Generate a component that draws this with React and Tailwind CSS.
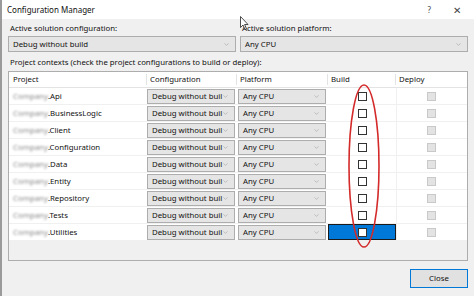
import { ChevronDown } from 'lucide-react'

const PROJECTS = ['Api', 'BusinessLogic', 'Client', 'Configuration', 'Data', 'Entity', 'Repository', 'Tests', 'Utilities']

function Combo({ value, className = '' }) {
  return (
    <div className={`flex items-center h-[15px] border border-[#adadad] bg-[#e5e5e5] pl-[4px] pr-[5px] ${className}`}>
      <span className="flex-1 min-w-0 whitespace-nowrap leading-[13px]">{value}</span>
      <ChevronDown size={7} strokeWidth={1.5} className="text-[#8a8a8a] shrink-0 ml-[1px]" />
    </div>
  )
}

function Row({ name, selected }) {
  return (
    <div className="grid grid-cols-[138px_90px_91px_68px_69px] h-[17px] border-b border-[#f0f0f0] items-center">
      <div className="pl-[4px] flex items-center leading-[13px]">
        <span className="blur-[1px] text-[#8a8a8a]">Company</span>
        <span>.{name}</span>
      </div>
      <div className="pr-[2px]">
        <Combo value="Debug without buil" className="pl-[3px] pr-[4px]" />
      </div>
      <div className="pl-[1px] pr-[2px]">
        <Combo value="Any CPU" />
      </div>
      <div className={`h-full flex items-center justify-center ${selected ? 'bg-[#0078d7] border border-[#1a1a1a]' : ''}`}>
        <div className="w-[9px] h-[9px] border border-[#333] bg-white" />
      </div>
      <div className="h-full flex items-center justify-center border-l border-[#f0f0f0]">
        <div className="w-[9px] h-[9px] border border-[#c9c9c9] bg-[#e3e3e3]" />
      </div>
    </div>
  )
}

export default function App() {
  return (
    <div
      className="relative w-[474px] h-[296px] overflow-hidden bg-[#f0f0f0] border-l-2 border-[#9a9a9a] text-[7.8px] text-[#111]"
      style={{ fontFamily: '"Noto Sans", "Open Sans", sans-serif' }}
    >
      {/* title bar */}
      <div className="h-[19px] bg-white flex items-center pl-[5px] pr-[13px] text-[8px]">
        <span className="flex-1">Configuration Manager</span>
        <span className="text-[#444] mr-[22px]">?</span>
        <span className="text-[#444] text-[10px] leading-none">✕</span>
      </div>

      <div className="px-[6px] pt-[3px]">
        <div className="grid grid-cols-2 gap-[4px]">
          <div>
            <div className="pl-[2px] h-[13px] leading-[13px]">Active solution configuration:</div>
            <Combo value="Debug without build" className="h-[16px] mt-[1px]" />
          </div>
          <div>
            <div className="pl-[2px] h-[13px] leading-[13px]">Active solution platform:</div>
            <Combo value="Any CPU" className="h-[16px] mt-[1px]" />
          </div>
        </div>

        <div className="pl-[2px] mt-[4px] h-[13px] leading-[13px]">
          Project contexts (check the project configurations to build or deploy):
        </div>

        <div className="relative mt-[2px] h-[190px] border border-[#adadad] bg-[#f0f0f0]">
          <div className="grid grid-cols-[138px_90px_91px_68px_69px] h-[16px] bg-white border-b border-[#e3e3e3] items-center">
            <div className="pl-[4px] border-r border-[#e3e3e3]">Project</div>
            <div className="pl-[3px] border-r border-[#e3e3e3]">Configuration</div>
            <div className="pl-[3px] border-r border-[#e3e3e3]">Platform</div>
            <div className="pl-[3px] border-r border-[#e3e3e3]">Build</div>
            <div className="pl-[3px]">Deploy</div>
          </div>
          <div className="bg-white">
            {PROJECTS.map((p, i) => (
              <Row key={p} name={p} selected={i === PROJECTS.length - 1} />
            ))}
          </div>

          {/* red annotation ellipse */}
          <svg className="absolute left-[338px] top-[10px] pointer-events-none" width="36" height="168" viewBox="0 0 36 168">
            <ellipse cx="17" cy="84" rx="15" ry="81" fill="none" stroke="#d42a2a" strokeWidth="1.6" />
          </svg>
        </div>

        <div className="flex justify-end mt-[8px]">
          <button className="w-[58px] h-[19px] border border-[#0078d7] bg-[#e1e1e1] leading-none">
            Close
          </button>
        </div>
      </div>

      {/* mouse cursor */}
      <svg className="absolute left-[238px] top-[16px]" width="10" height="15" viewBox="0 0 10 15">
        <path d="M0.5 0.5 L0.5 11.5 L3 9 L5 13.5 L6.5 12.8 L4.6 8.5 L8 8.5 Z" fill="white" stroke="#222" strokeWidth="0.8" />
      </svg>
    </div>
  )
}
